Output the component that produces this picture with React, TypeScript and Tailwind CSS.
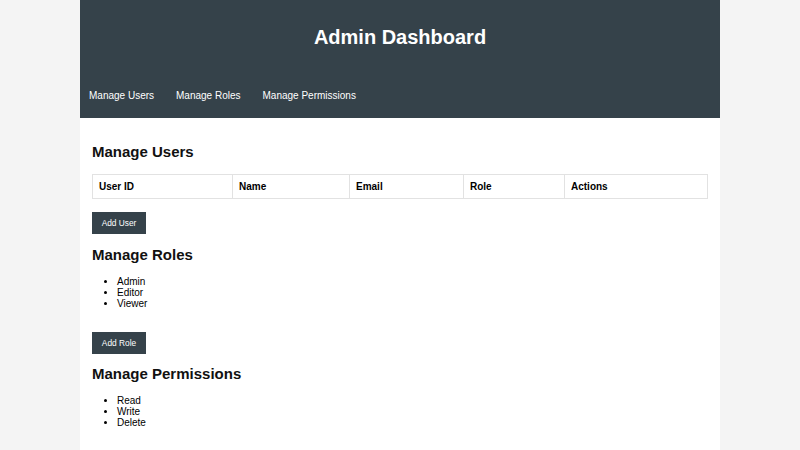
import React from 'react'

const columns = [
  { label: 'User ID', width: 'w-[140px]' },
  { label: 'Name', width: 'w-[117px]' },
  { label: 'Email', width: 'w-[114px]' },
  { label: 'Role', width: 'w-[101px]' },
  { label: 'Actions', width: '' },
]

const Button = ({ children, className = '' }: { children: React.ReactNode; className?: string }) => (
  <button
    className={`block h-[22px] bg-[#35424a] px-[9px] text-[8.33px] leading-[10px] text-white ${className}`}
  >
    {children}
  </button>
)

const Heading = ({ children, className = '' }: { children: React.ReactNode; className?: string }) => (
  <h2 className={`text-[15px] font-bold leading-[18px] text-[#111] ${className}`}>{children}</h2>
)

const List = ({ items, className = '' }: { items: string[]; className?: string }) => (
  <ul className={`list-disc pl-[25px] text-[10px] leading-[11px] ${className}`}>
    {items.map((item) => (
      <li key={item}>{item}</li>
    ))}
  </ul>
)

const App = () => {
  return (
    <div
      className="min-h-screen w-full bg-[#f4f4f4] text-black"
      style={{ fontFamily: '"Liberation Sans", Arial, sans-serif' }}
    >
      <div className="mx-auto min-h-[450px] w-[640px] bg-white">
        {/* header */}
        <header className="flex h-[118px] flex-col bg-[#35424a] text-white">
          <h1 className="mt-[26px] text-center text-[20px] font-bold leading-[23px]">
            Admin Dashboard
          </h1>
          <nav className="mt-[41px] flex gap-[22px] pl-[9px] text-[10px] leading-[12px]">
            <a href="#users">Manage Users</a>
            <a href="#roles">Manage Roles</a>
            <a href="#permissions">Manage Permissions</a>
          </nav>
        </header>

        {/* content */}
        <main className="flex flex-col items-start px-[12px] pb-[20px] pt-[25px]">
          {/* users */}
          <Heading>Manage Users</Heading>
          <table className="mt-[13px] w-full border-collapse border border-[#e2e2e2] text-left text-[10px]">
            <thead>
              <tr className="h-[24px]">
                {columns.map((col) => (
                  <th
                    key={col.label}
                    className={`border border-[#e2e2e2] px-[6px] font-bold leading-[12px] ${col.width}`}
                  >
                    {col.label}
                  </th>
                ))}
              </tr>
            </thead>
          </table>
          <Button className="mt-[13px] w-[54px]">Add User</Button>

          {/* roles */}
          <Heading className="mt-[12px]">Manage Roles</Heading>
          <List items={['Admin', 'Editor', 'Viewer']} className="mt-[12px]" />
          <Button className="mt-[23px] w-[54px]">Add Role</Button>

          {/* permissions */}
          <Heading className="mt-[11px]">Manage Permissions</Heading>
          <List items={['Read', 'Write', 'Delete']} className="mt-[12px]" />
        </main>
      </div>
    </div>
  )
}

export default App
